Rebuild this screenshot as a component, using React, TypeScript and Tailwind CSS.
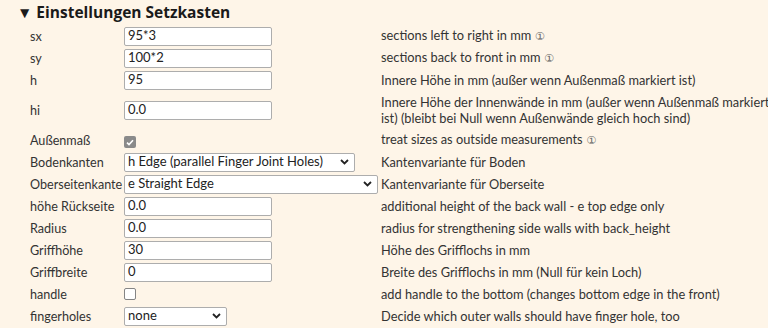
import React from "react";

const font = { fontFamily: 'Lato, "Open Sans", sans-serif' };

function TextInput({ value }: { value: string }) {
  return (
    <div className="flex h-[19px] w-[148px] items-center rounded-[2px] border border-[#adadad] bg-white pl-[3px] text-[13px] text-[#222]">
      {value}
    </div>
  );
}

function Chevron() {
  return (
    <svg width="9" height="6" viewBox="0 0 9 6" className="shrink-0">
      <polyline points="1,1 4.5,4.5 8,1" fill="none" stroke="#222" strokeWidth="1.8" />
    </svg>
  );
}

function Select({ value, width }: { value: string; width: string }) {
  return (
    <div
      className={`flex h-[19px] items-center justify-between rounded-[2px] border border-[#adadad] bg-white pl-[3px] pr-[5px] text-[13px] text-[#222] ${width}`}
    >
      <span>{value}</span>
      <Chevron />
    </div>
  );
}

function Checkbox({ checked }: { checked?: boolean }) {
  if (checked) {
    return (
      <div className="mt-[4px] flex h-[12px] w-[12px] items-center justify-center rounded-[2px] bg-[#8a8a8a]">
        <svg width="8" height="7" viewBox="0 0 8 7">
          <polyline points="1,3.6 3,5.6 7,1.2" fill="none" stroke="white" strokeWidth="1.6" />
        </svg>
      </div>
    );
  }
  return <div className="h-[12px] w-[12px] rounded-[2px] border border-[#858585] bg-white" />;
}

const Info = () => (
  <span className="text-[11px] text-[#666]" style={{ fontFamily: '"DejaVu Sans", sans-serif' }}>
    {" "}①
  </span>
);

type Row = {
  label: string;
  control: React.ReactNode;
  desc: React.ReactNode;
  h?: string;
};

const rows: Row[] = [
  { label: "sx", control: <TextInput value="95*3" />, desc: <>sections left to right in mm<Info /></> },
  { label: "sy", control: <TextInput value="100*2" />, desc: <>sections back to front in mm<Info /></> },
  { label: "h", control: <TextInput value="95" />, desc: "Innere Höhe in mm (außer wenn Außenmaß markiert ist)" },
  {
    label: "hi",
    control: <TextInput value="0.0" />,
    desc: (
      <>
        Innere Höhe der Innenwände in mm (außer wenn Außenmaß markiert
        <br />
        ist) (bleibt bei Null wenn Außenwände gleich hoch sind)
      </>
    ),
    h: "h-[38px]",
  },
  { label: "Außenmaß", control: <Checkbox checked />, desc: <>treat sizes as outside measurements<Info /></> },
  { label: "Bodenkanten", control: <Select value="h Edge (parallel Finger Joint Holes)" width="w-[231px]" />, desc: "Kantenvariante für Boden" },
  { label: "Oberseitenkante", control: <Select value="e Straight Edge" width="w-[254px]" />, desc: "Kantenvariante für Oberseite" },
  { label: "höhe Rückseite", control: <TextInput value="0.0" />, desc: "additional height of the back wall - e top edge only" },
  { label: "Radius", control: <TextInput value="0.0" />, desc: "radius for strengthening side walls with back_height" },
  { label: "Griffhöhe", control: <TextInput value="30" />, desc: "Höhe des Grifflochs in mm" },
  { label: "Griffbreite", control: <TextInput value="0" />, desc: "Breite des Grifflochs in mm (Null für kein Loch)" },
  { label: "handle", control: <Checkbox />, desc: "add handle to the bottom (changes bottom edge in the front)" },
  { label: "fingerholes", control: <Select value="none" width="w-[103px]" />, desc: "Decide which outer walls should have finger hole, too" },
];

export default function App() {
  return (
    <div className="h-[328px] w-[768px] overflow-hidden bg-[#fef5e8] text-[#333]" style={font}>
      <div
        className="flex h-[25px] items-center pl-[17px] text-[15.5px] font-bold text-[#1a1a1a]"
        style={{ fontFamily: '"Open Sans", sans-serif' }}
      >
        ▼ Einstellungen Setzkasten
      </div>
      <div className="flex flex-col pl-[30px]">
        {rows.map((r) => (
          <div key={r.label} className={`grid grid-cols-[94px_257px_1fr] items-center ${r.h ?? "h-[22px]"}`}>
            <div className="whitespace-nowrap text-[12.6px] leading-[17px] text-[#333]">{r.label}</div>
            <div className="flex items-center">{r.control}</div>
            <div className="whitespace-nowrap text-[12.8px] leading-[16.5px] text-[#333]">{r.desc}</div>
          </div>
        ))}
      </div>
    </div>
  );
}
